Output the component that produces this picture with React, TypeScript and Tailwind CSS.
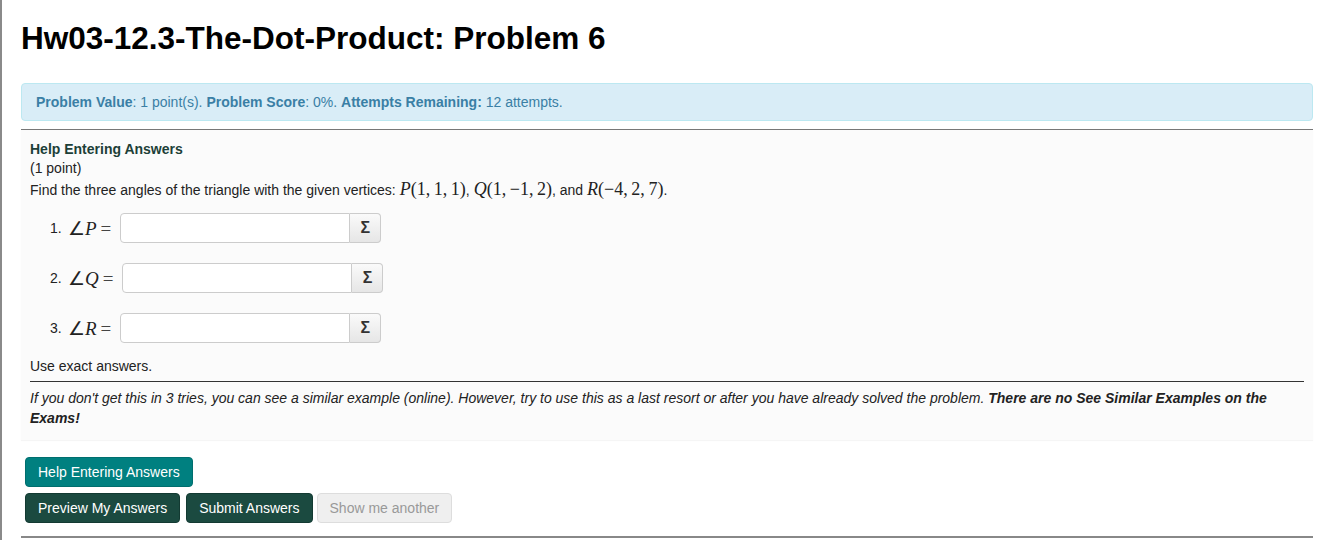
const sans = "font-['Liberation_Sans',Arial,sans-serif]";
const serif = "font-['Liberation_Serif','Times_New_Roman',serif]";

function M({ children }: { children: React.ReactNode }) {
  return <span className={`${serif} text-[18px] leading-none`}>{children}</span>;
}

function I({ children }: { children: React.ReactNode }) {
  return <i className="italic">{children}</i>;
}

function AnswerRow({ n, letter }: { n: number; letter: string }) {
  return (
    <div className="flex h-[30px] items-center pl-[20px]">
      <span className="w-[18px] text-[14px]">{n}.</span>
      <span className={`${serif} text-[19px] leading-none whitespace-nowrap`}>
        ∠<I>{letter}</I>
        <span className="ml-[4px] text-[#444]">=</span>
      </span>
      <div className="ml-[9px] flex h-[30px] w-[261px]">
        <input
          className="h-full flex-1 rounded-l-[4px] border border-[#ccc] bg-white px-2 outline-none"
          readOnly
          type="text"
        />
        <button className="flex h-full w-[31px] items-center justify-center rounded-r-[4px] border border-l-0 border-[#ccc] bg-gradient-to-b from-[#fafafa] to-[#e6e6e6] text-[16px] font-bold text-[#333]">
          Σ
        </button>
      </div>
    </div>
  );
}

export default function App() {
  return (
    <div className={`${sans} h-[540px] w-full overflow-hidden border-l-2 border-[#8a8a8a] bg-white pl-[19px] pr-[17px] text-[#222]`}>
      <h1 className="pt-[21px] text-[31.5px] leading-[34px] font-bold text-black">
        Hw03-12.3-The-Dot-Product: Problem 6
      </h1>
      <div className="mt-[28px] flex h-[38px] items-center rounded-[4px] border border-[#bce8f1] bg-[#d9edf7] px-[14px] text-[14px] text-[#3a7fa5]">
        <span>
          <b>Problem Value</b>: 1 point(s). <b>Problem Score</b>: 0%.{" "}
          <b>Attempts Remaining:</b> 12 attempts.
        </span>
      </div>
      <div className="mt-[8px] border-t border-[#777]" />
      <div className="bg-[#fbfbfb] px-[9px] pt-[9px] pb-[12px] text-[14px] leading-[20px] shadow-[0_1px_1px_rgba(0,0,0,0.04)]">
        <div className="font-bold text-[#1d3f38]">Help Entering Answers</div>
        <div className="leading-[18px]">(1 point)</div>
        <div className="mt-[2px] leading-[22px]">
          Find the three angles of the triangle with the given vertices:{" "}
          <M>
            <I>P</I>(1,&thinsp;1,&thinsp;1)
          </M>
          ,{" "}
          <M>
            <I>Q</I>(1,&thinsp;−1,&thinsp;2)
          </M>
          , and{" "}
          <M>
            <I>R</I>(−4,&thinsp;2,&thinsp;7)
          </M>
          .
        </div>
        <div className="mt-[12px] flex flex-col gap-[20px]">
          <AnswerRow n={1} letter="P" />
          <AnswerRow n={2} letter="Q" />
          <AnswerRow n={3} letter="R" />
        </div>
        <div className="mt-[13px]">Use exact answers.</div>
        <div className="mt-[5px] border-t border-[#333]" />
        <p className="mt-[6px] italic">
          If you don't get this in 3 tries, you can see a similar example (online). However, try to use
          this as a last resort or after you have already solved the problem.{" "}
          <b>There are no See Similar Examples on the Exams!</b>
        </p>
      </div>
      <div className="mt-[17px] flex flex-col gap-[6px] pl-[4px] text-[14px]">
        <div>
          <button className="h-[30px] rounded-[4px] border border-[#006e6e] bg-[#008080] px-[12px] text-white">
            Help Entering Answers
          </button>
        </div>
        <div className="flex gap-[6px]">
          <button className="h-[30px] rounded-[4px] border border-[#133a32] bg-[#1b4a40] px-[12px] text-white">
            Preview My Answers
          </button>
          <button className="h-[30px] rounded-[4px] border border-[#133a32] bg-[#1b4a40] px-[12px] text-white">
            Submit Answers
          </button>
          <button className="-ml-[2px] h-[30px] rounded-[4px] border border-[#ddd] bg-[#efefef] px-[12px] text-[#999]">
            Show me another
          </button>
        </div>
      </div>
      <div className="mt-[13px] border-t-2 border-[#888]" />
    </div>
  );
}
